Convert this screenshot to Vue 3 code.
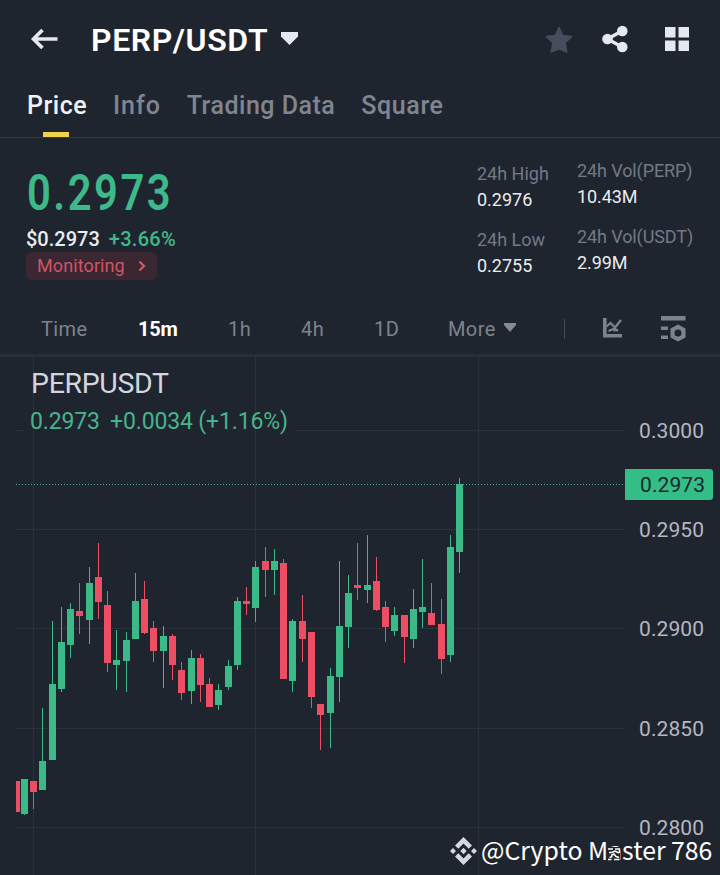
<template>
  <div class="screen">
    <header class="topbar">
      <svg class="back" width="28" height="22" viewBox="0 0 28 22">
        <path d="M12.500 2 3.500 11l9 9M3.500 11h24" />
      </svg>
      <h1 class="pair">PERP/USDT</h1>
      <svg class="caret" width="17" height="13" viewBox="0 0 17 13">
        <path d="M0 0h17v4.500L8.500 13 0 4.500z" />
      </svg>
      <div class="actions">
        <svg class="star" width="28" height="28" viewBox="0 0 28 28">
          <path d="M14 1.500l3.800 8 8.700 1.100-6.400 6 1.700 9.400-7.800-3.200L6.200 26l1.700-9.400-6.400-6 8.700-1.100z" />
        </svg>
        <svg class="share" width="26" height="28" viewBox="0 0 26 28">
          <path d="M5.500 14 20 6M5.500 14 20 22" />
          <circle cx="5.500" cy="14" r="5.300" />
          <circle cx="20.300" cy="6" r="5.300" />
          <circle cx="20.300" cy="22" r="5.300" />
        </svg>
        <svg class="grid" width="24" height="24" viewBox="0 0 24 24">
          <path d="M0 0h10.500v10.500H0zM13.500 0H24v10.500H13.500zM0 13.500h10.500V24H0zM13.500 13.500H24V24H13.500z" />
        </svg>
      </div>
    </header>

    <nav class="tabs">
      <a v-for="tab in tabs" :key="tab" class="tab" :class="{ active: tab === 'Price' }">{{ tab }}</a>
    </nav>

    <section class="ticker">
      <div class="ticker-main">
        <div class="last">0.2973</div>
        <div class="sub">
          <span class="usd">$0.2973</span>
          <span class="change">+3.66%</span>
        </div>
        <div class="badge">
          <span>Monitoring</span>
          <svg width="8" height="12" viewBox="0 0 8 12"><path d="M1.500 1.500 6 6l-4.500 4.500" /></svg>
        </div>
      </div>
      <div class="stats stats-price">
        <div v-for="s in priceStats" :key="s.label" class="stat">
          <div class="stat-label">{{ s.label }}</div>
          <div class="stat-value">{{ s.value }}</div>
        </div>
      </div>
      <div class="stats stats-vol">
        <div v-for="s in volStats" :key="s.label" class="stat">
          <div class="stat-label">{{ s.label }}</div>
          <div class="stat-value">{{ s.value }}</div>
        </div>
      </div>
    </section>

    <div class="intervals">
      <span class="iv iv-time">Time</span>
      <span class="iv iv-15m active">15m</span>
      <span class="iv iv-1h">1h</span>
      <span class="iv iv-4h">4h</span>
      <span class="iv iv-1d">1D</span>
      <span class="iv iv-more">
        More
        <svg width="12" height="9" viewBox="0 0 12 9"><path d="M0 0h12v2L6 9 0 2z" /></svg>
      </span>
      <i class="sep"></i>
      <svg class="ico-chart" width="19" height="20" viewBox="0 0 19 20">
        <path class="line" d="M1.800 0v17.700h17.200" />
        <path class="thin" d="M3.500 8.500 7.500 5l4.500 4.500L18 2M5.500 13l6-2.500L15 13M11.500 9v4.500" />
      </svg>
      <svg class="ico-settings" width="26" height="26" viewBox="0 0 26 26">
        <path d="M0 0h24.500v4.500H0zM0 10.500h7v3.500H0zM0 19.500h7v3.500H0z" />
        <path fill-rule="evenodd" d="M17 8.500l7.500 4v9L17 25.500l-7.500-4v-9zM17 13.500a3.500 3.500 0 1 0 0 7 3.500 3.500 0 0 0 0-7z" />
      </svg>
    </div>

    <svg class="chart" width="720" height="521" viewBox="0 354 720 521">
      <rect class="edge" x="0" y="354" width="720" height="3" />
      <path v-for="l in levels" :key="l.label" class="rule" :d="`M16 ${l.y}H624`" />
      <rect class="clear" x="24" y="409" width="272" height="27" />
      <path v-for="x in gridX" :key="x" class="rule" :d="`M${x} 354V875`" />
      <g v-for="c in candles" :key="c[0]" :class="c[1]">
        <rect :x="c[0] + 3" :y="c[2]" width="1" :height="c[5] - c[2]" />
        <rect :x="c[0]" :y="c[3]" :width="c[0] === 16 ? 3 : 7" :height="c[4] - c[3]" />
      </g>
      <path class="last-line" d="M16 484.500H625" />
      <text class="symbol" x="31" y="393" textLength="138">PERPUSDT</text>
      <text class="quote" x="30" y="429" textLength="70">0.2973</text>
      <text class="quote" x="110" y="429" textLength="178">+0.0034 (+1.16%)</text>
      <text v-for="l in levels" :key="l.label" class="axis" x="639" :y="l.y + 7.500" textLength="65">{{ l.label }}</text>
      <path class="tag" d="M625 469h85a3 3 0 0 1 3 3v25a3 3 0 0 1-3 3h-85z" />
      <text class="axis tag-text" x="640" y="492" textLength="65">0.2973</text>
    </svg>

    <div class="watermark">
      <svg class="logo" width="27" height="28" viewBox="0 0 27 28">
        <path d="M13.500 0l8.500 8.500-3.300 3.300-5.200-5.200-5.200 5.200L5 8.500zM13.500 28l8.500-8.500-3.300-3.300-5.200 5.200-5.200-5.200L5 19.500zM0 14l3-3 3 3-3 3zM10.300 14l3.200-3.200 3.200 3.200-3.200 3.200zM21 14l3-3 3 3-3 3z" />
      </svg>
      <span class="author">@Crypto M<span class="glyph">a<svg width="12" height="14" viewBox="0 0 12 14">
        <rect width="12" height="14" class="patch" />
        <path d="M0 2h5M7 2h4.500v4M1 5.500h3l3-1.500 4 2M3 8.500 6 7l2 2.500 3 1M0 12.500h3.500M6 12.500h5.500M1.500 10.500l3-1" />
      </svg></span>ster 786</span>
    </div>
  </div>
</template>

<script setup>
const tabs = ['Price', 'Info', 'Trading Data', 'Square']

const priceStats = [
  { label: '24h High', value: '0.2976' },
  { label: '24h Low', value: '0.2755' }
]
const volStats = [
  { label: '24h Vol(PERP)', value: '10.43M' },
  { label: '24h Vol(USDT)', value: '2.99M' }
]

const gridX = [33.5, 255.5, 478.5]
const levels = [
  { label: '0.3000', y: 430.5 },
  { label: '0.2950', y: 529.5 },
  { label: '0.2900', y: 628.5 },
  { label: '0.2850', y: 728.5 },
  { label: '0.2800', y: 827.5 }
]

// x, direction, wick top, body top, body bottom, wick bottom
const candles = [
  [16, 'down', 781, 781, 812, 812],
  [21, 'up', 779, 779, 814, 815],
  [30, 'down', 781, 781, 792, 809],
  [39, 'up', 708, 761, 790, 790],
  [49, 'up', 621, 684, 760, 760],
  [58, 'up', 607, 642, 689, 692],
  [67, 'up', 603, 609, 645, 658],
  [76, 'down', 583, 611, 616, 634],
  [86, 'up', 567, 583, 620, 644],
  [95, 'down', 543, 577, 602, 619],
  [104, 'down', 591, 605, 663, 672],
  [113, 'up', 630, 660, 665, 690],
  [123, 'up', 632, 640, 661, 692],
  [132, 'up', 573, 601, 639, 639],
  [141, 'down', 581, 599, 633, 634],
  [150, 'down', 621, 628, 651, 662],
  [160, 'up', 626, 636, 651, 688],
  [169, 'down', 634, 636, 665, 680],
  [178, 'down', 662, 670, 693, 700],
  [188, 'up', 650, 658, 691, 704],
  [197, 'down', 654, 658, 685, 702],
  [206, 'down', 678, 684, 707, 707],
  [215, 'up', 684, 690, 705, 710],
  [225, 'up', 660, 666, 687, 690],
  [234, 'up', 597, 601, 665, 670],
  [243, 'down', 587, 601, 604, 615],
  [252, 'up', 561, 567, 608, 622],
  [262, 'down', 547, 561, 570, 597],
  [271, 'up', 549, 561, 570, 595],
  [280, 'down', 559, 563, 679, 679],
  [289, 'up', 619, 621, 681, 692],
  [299, 'down', 595, 621, 639, 662],
  [308, 'down', 632, 632, 697, 708],
  [317, 'down', 704, 704, 715, 750],
  [327, 'up', 668, 676, 713, 748],
  [336, 'up', 561, 626, 677, 702],
  [345, 'up', 575, 593, 627, 648],
  [354, 'down', 543, 585, 588, 600],
  [364, 'up', 535, 585, 590, 603],
  [373, 'down', 557, 581, 610, 611],
  [382, 'down', 601, 607, 627, 642],
  [391, 'up', 607, 615, 631, 636],
  [401, 'down', 615, 615, 637, 663],
  [410, 'up', 589, 609, 639, 648],
  [419, 'up', 559, 607, 612, 628],
  [428, 'down', 583, 613, 625, 625],
  [438, 'down', 599, 624, 659, 674],
  [447, 'up', 535, 547, 655, 662],
  [456, 'up', 478, 484, 552, 573]
]
</script>

<style>
body {
  margin: 0;
  background: #1f252f;
}
</style>

<style scoped>
.screen {
  position: relative;
  width: 720px;
  height: 875px;
  overflow: hidden;
  background: #1f252f;
  font-family: Roboto, "Liberation Sans", sans-serif;
  color: #eaecef;
}
svg {
  display: block;
  flex: none;
}
.topbar {
  display: flex;
  align-items: center;
  height: 77px;
  padding: 0 31px 0 30px;
}
.back path {
  fill: none;
  stroke: #e6e8f0;
  stroke-width: 3.6;
}
.pair {
  margin: 3px 0 0 33px;
  width: 190px;
  font-size: 32px;
  font-weight: 600;
  line-height: 40px;
  letter-spacing: 0.6px;
  color: #fff;
}
.caret {
  fill: #e6e8f0;
}
.actions {
  display: flex;
  align-items: center;
  margin-left: auto;
}
.star {
  margin-top: 2px;
}
.star path {
  fill: #474d5a;
  stroke: #474d5a;
  stroke-width: 1.5;
  stroke-linejoin: round;
}
.share {
  margin: 0 37px 0 29px;
  fill: #e6e8f0;
}
.share path {
  stroke: #e6e8f0;
  stroke-width: 3.5;
}
.grid {
  fill: #e6e8f0;
}
.tabs {
  display: flex;
  gap: 26px;
  height: 60px;
  padding-left: 27px;
  border-bottom: 1px solid #313741;
}
.tab {
  position: relative;
  font-size: 25px;
  font-weight: 500;
  line-height: 58px;
  letter-spacing: 0.5px;
  color: #808691;
  white-space: nowrap;
}
.tab:nth-child(2) {
  letter-spacing: 0.9px;
}
.tab:last-child {
  letter-spacing: 0.6px;
}
.tab.active {
  color: #f0f2f6;
}
.tab.active::after {
  content: "";
  position: absolute;
  left: 16px;
  bottom: 0;
  width: 26px;
  height: 5px;
  background: #f2d24b;
}
.ticker {
  display: flex;
  height: 165px;
  padding-left: 26px;
}
.ticker-main {
  width: 451px;
  padding-top: 27px;
}
.last {
  width: max-content;
  margin-left: 1px;
  font-size: 50px;
  font-weight: 600;
  line-height: 56px;
  letter-spacing: 3px;
  color: #3eb98a;
  transform: scaleX(0.835);
  transform-origin: 0 50%;
}
.sub {
  display: flex;
  gap: 9px;
  margin-top: 5px;
  font-size: 20px;
  line-height: 26px;
  font-weight: 500;
}
.change {
  color: #3eb98a;
  letter-spacing: 0.3px;
}
.badge {
  display: flex;
  align-items: center;
  justify-content: space-between;
  box-sizing: border-box;
  width: 131px;
  height: 28px;
  padding: 0 11px;
  border-radius: 6px;
  background: #3a2731;
  color: #cf5567;
  font-size: 18px;
  line-height: 26px;
  letter-spacing: 0.1px;
}
.badge path {
  fill: none;
  stroke: #cf5567;
  stroke-width: 2.4;
}
.stats-price {
  width: 100px;
  padding-top: 23px;
}
.stats-vol {
  padding-top: 20px;
}
.stat {
  height: 66px;
  font-size: 18px;
  line-height: 26px;
  white-space: nowrap;
}
.stat-label {
  color: #737985;
}
.stats-vol .stat {
  letter-spacing: -0.1px;
}
.stat-value {
  color: #eaecef;
}
.intervals {
  display: flex;
  align-items: center;
  height: 51px;
  padding-left: 41px;
  font-size: 20px;
  color: #7d838e;
}
.iv {
  flex: none;
  letter-spacing: 0.4px;
}
.iv.active {
  font-weight: 700;
  letter-spacing: -0.2px;
  color: #fff;
}
.iv-time {
  width: 97px;
}
.iv-15m {
  width: 90px;
}
.iv-1h {
  width: 73px;
}
.iv-4h {
  width: 73px;
}
.iv-1d {
  width: 74px;
}
.iv-more {
  display: flex;
  align-items: center;
  gap: 8px;
  width: 116px;
}
.iv-more svg {
  margin-bottom: 2px;
  fill: #848a94;
}
.sep {
  width: 1px;
  height: 20px;
  background: #434955;
}
.ico-chart {
  margin: 0 0 2px 38px;
  fill: none;
  stroke: #7d838e;
}
.ico-chart .line {
  stroke-width: 3.6;
}
.ico-chart .thin {
  stroke-width: 2.2;
}
.ico-settings {
  margin-left: 39px;
  fill: #7d838e;
}
.edge {
  fill: #282e38;
}
.rule {
  stroke: #2b323c;
  stroke-width: 1;
}
.clear {
  fill: #1f252f;
}
.up {
  fill: #3bb987;
}
.down {
  fill: #ed4e64;
}
.last-line {
  stroke: #5aa595;
  stroke-dasharray: 1 2;
}
.symbol {
  font-size: 28.5px;
  fill: #d3d6de;
}
.quote {
  font-size: 23px;
  fill: #47b48b;
}
.axis {
  font-size: 21px;
  fill: #b4b7c1;
}
.tag {
  fill: #34bd87;
}
.tag-text {
  fill: #172a2b;
}
.watermark {
  position: absolute;
  left: 450px;
  top: 837px;
  display: flex;
  align-items: center;
  gap: 4px;
  height: 28px;
}
.logo {
  fill: #d5d8e0;
}
.author {
  margin-bottom: 4px;
  font-family: "Noto Sans CJK SC", "Noto Sans", sans-serif;
  font-size: 24.8px;
  line-height: 26px;
  color: #fff;
  white-space: nowrap;
}
.glyph {
  position: relative;
}
.glyph svg {
  position: absolute;
  left: 0;
  bottom: 6px;
}
.glyph .patch {
  fill: #1f252f;
}
.glyph path {
  fill: none;
  stroke: #fff;
  stroke-width: 1.5;
}
</style>
